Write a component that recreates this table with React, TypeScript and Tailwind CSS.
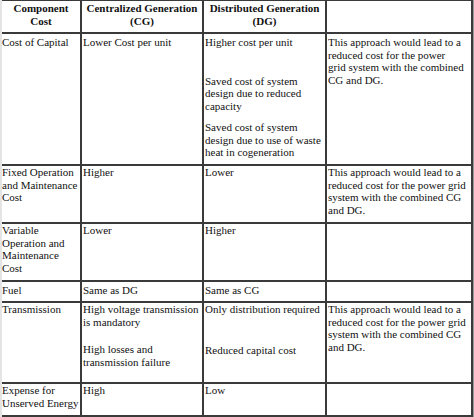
import React from 'react';

type Row = {
  pad: string;
  cells: React.ReactNode[];
};

const lines = (items: string[]) =>
  items.map((t, i) => (
    <React.Fragment key={i}>
      {t}
      {i < items.length - 1 && <br />}
    </React.Fragment>
  ));

const approachA = lines([
  'This approach would lead to a',
  'reduced cost for the power',
  'grid system with the combined',
  'CG and DG.',
]);

const approachB = lines([
  'This approach would lead to a',
  'reduced cost for the power grid',
  'system with the combined CG',
  'and DG.',
]);

const rows: Row[] = [
  {
    pad: 'pt-[2px]',
    cells: [
      'Cost of Capital',
      'Lower Cost per unit',
      <>
        <p>Higher cost per unit</p>
        <p className="mt-[26px]">{lines(['Saved cost of system', 'design due to reduced', 'capacity'])}</p>
        <p className="mt-[8px]">
          {lines(['Saved cost of system', 'design due to use of waste', 'heat in cogeneration'])}
        </p>
      </>,
      approachA,
    ],
  },
  {
    pad: 'pt-0',
    cells: [lines(['Fixed Operation', 'and Maintenance', 'Cost']), 'Higher', 'Lower', approachB],
  },
  {
    pad: 'pt-0',
    cells: [lines(['Variable', 'Operation and', 'Maintenance', 'Cost']), 'Lower', 'Higher', ''],
  },
  {
    pad: 'pt-[2px]',
    cells: ['Fuel', 'Same as DG', 'Same as CG', ''],
  },
  {
    pad: 'pt-0',
    cells: [
      'Transmission',
      <>
        <p>{lines(['High voltage transmission', 'is mandatory'])}</p>
        <p className="mt-[15px]">{lines(['High losses and', 'transmission failure'])}</p>
      </>,
      <>
        <p>Only distribution required</p>
        <p className="mt-[28px]">Reduced capital cost</p>
      </>,
      approachB,
    ],
  },
  {
    pad: 'pt-0',
    cells: [lines(['Expense for', 'Unserved Energy']), 'High', 'Low', ''],
  },
];

const headers: React.ReactNode[] = [
  lines(['Component', 'Cost']),
  lines(['Centralized Generation', '(CG)']),
  lines(['Distributed Generation', '(DG)']),
  '',
];

export default function App() {
  return (
    <div className="flex w-[474px] h-[417px] bg-white text-[#111] text-[11px] leading-[12.7px] font-['Liberation_Serif','Times_New_Roman',serif]">
      {/* faint left edge of the scan */}
      <div className="w-[2px] h-full bg-[#e4e4e4]" />

      <div className="bg-[#3a3a3a] pt-px pb-[2px] pr-[2px]">
        <div className="grid grid-cols-[78px_120px_121px_144px] grid-rows-[31px_130px_56px_56px_19px_79px_31px] gap-[2px]">
          {headers.map((h, i) => (
            <div
              key={`h${i}`}
              className="bg-white pt-px text-center font-bold whitespace-nowrap font-['Liberation_Serif',serif]"
            >
              {h}
            </div>
          ))}

          {rows.map((row, r) =>
            row.cells.map((cell, c) => (
              <div
                key={`${r}-${c}`}
                className={`bg-white whitespace-nowrap font-['Liberation_Serif',serif] ${row.pad} ${
                  c === 0 ? 'pl-0' : 'pl-px'
                }`}
              >
                {cell}
              </div>
            ))
          )}
        </div>
      </div>

      {/* grey right edge */}
      <div className="w-px h-full bg-[#9a9a9a]" />
    </div>
  );
}
